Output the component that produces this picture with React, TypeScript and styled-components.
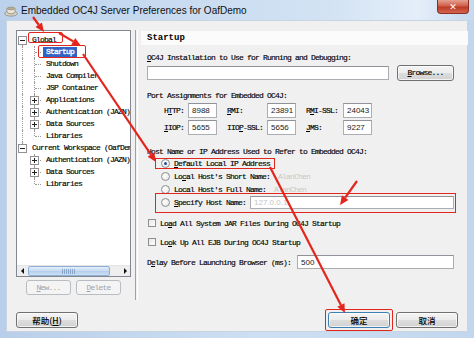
import React from 'react';
import styled, { createGlobalStyle, css } from 'styled-components';

const MONO = `"Liberation Mono", "DejaVu Sans Mono", monospace`;
const CJK = `"Noto Sans CJK SC", "Noto Sans", sans-serif`;

const GlobalStyle = createGlobalStyle`
  html, body { margin: 0; padding: 0; background: #5f7184; }
  #root { width: 474px; height: 338px; }
`;

// shared look of the small SimSun-like dialog text
const monoText = css`
  font-family: ${MONO};
  font-size: 8px;
  letter-spacing: -0.8px;
  color: #000;
  -webkit-text-stroke: 0.15px #000;
`;

const Window = styled.div`
  position: relative;
  width: 474px;
  height: 338px;
  box-sizing: border-box;
  padding: 0 6px 6px 6px;
  background: linear-gradient(90deg, #b9cfe9 0%, #cddff2 55%, #c2d6ed 100%);
  display: flex;
  flex-direction: column;
  overflow: hidden;
`;

const TitleBar = styled.div`
  height: 20px;
  margin: 0 -6px;
  padding: 0 5px 0 4px;
  display: flex;
  align-items: center;
  background: linear-gradient(90deg, #bcd2ec 0%, #d3e3f4 70%, #e4eef9 88%, #c6d9ef 100%);
`;

const Title = styled.span`
  margin-left: 3px;
  font-family: "Liberation Sans", Arial, sans-serif;
  font-size: 10px;
  color: #111;
  white-space: nowrap;
`;

const CloseButton = styled.div`
  margin-left: auto;
  align-self: flex-start;
  width: 32px;
  height: 14px;
  box-sizing: border-box;
  border: 1px solid #8a2d22;
  border-top: none;
  border-radius: 0 0 4px 4px;
  background: linear-gradient(#e5a08f 0%, #d0604b 45%, #bd3a26 55%, #d2664d 100%);
  display: flex;
  align-items: center;
  justify-content: center;
  color: #fff;
  font-family: "DejaVu Sans", sans-serif;
  font-weight: bold;
  font-size: 9px;
`;

const Body = styled.div`
  flex: 1;
  display: flex;
  flex-direction: column;
  background: #f0f0f0;
  box-shadow: inset 0 0 0 1px #c8d4e2;
`;

const Main = styled.div`
  display: flex;
  margin-top: 10px;
  height: 270px;
`;

const LeftCol = styled.div`
  margin-left: 10px;
  width: 115px;
  display: flex;
  flex-direction: column;
`;

const TreeBox = styled.div`
  height: 247px;
  box-sizing: border-box;
  border: 1px solid #828790;
  background: #fff;
  display: flex;
  flex-direction: column;
`;

const TreeBody = styled.div`
  flex: 1;
  padding-top: 3px;
  overflow: hidden;
`;

const TreeRow = styled.div`
  display: flex;
  align-items: center;
  height: 12px;
  white-space: nowrap;
`;

type VLine = 'full' | 'top' | 'bottom' | 'none';

const Gutter = styled.span<{ $v: VLine; $h: boolean }>`
  position: relative;
  flex: 0 0 12px;
  height: 12px;
  &::before {
    content: '';
    position: absolute;
    left: 5px;
    top: ${(p) => (p.$v === 'bottom' ? '6px' : '0')};
    bottom: ${(p) => (p.$v === 'top' ? '6px' : '0')};
    border-left: ${(p) => (p.$v === 'none' ? '0' : '1px dotted #9a9a9a')};
  }
  &::after {
    content: '';
    position: absolute;
    left: 6px;
    right: 0;
    top: 6px;
    border-top: ${(p) => (p.$h ? '1px dotted #9a9a9a' : '0')};
  }
  svg { position: absolute; left: 1px; top: 2px; z-index: 1; }
`;

const TreeLabel = styled.span<{ $root?: boolean; $selected?: boolean }>`
  ${monoText}
  margin-left: ${(p) => (p.$root ? '0' : '2px')};
  padding: 0 3px;
  height: 10px;
  line-height: 10px;
  ${(p) =>
    p.$selected &&
    css`
      background: #3063c4;
      color: #fff;
      -webkit-text-stroke: 0.3px #fff;
    `}
`;

const HScroll = styled.div`
  height: 10px;
  display: flex;
  align-items: stretch;
  background: #eeeeee;
  border-top: 1px solid #e4e4e4;
`;

const ScrollArrow = styled.div<{ $dir: 'left' | 'right' }>`
  width: 10px;
  display: flex;
  align-items: center;
  justify-content: center;
  &::before {
    content: '';
    border-top: 3px solid transparent;
    border-bottom: 3px solid transparent;
    ${(p) => (p.$dir === 'left' ? 'border-right: 3px solid #111;' : 'border-left: 3px solid #111;')}
  }
`;

const ScrollThumb = styled.div`
  margin-left: 1px;
  width: 82px;
  box-sizing: border-box;
  border: 1px solid #8eb0d6;
  border-radius: 2px;
  background: linear-gradient(#e3eefa, #c4d9f1 50%, #b3cdec 51%, #cfe0f4);
  display: flex;
  align-items: center;
  justify-content: center;
  &::before {
    content: '';
    width: 14px;
    height: 5px;
    background: repeating-linear-gradient(90deg, #8aa8cc 0 1px, transparent 1px 2px);
  }
`;

const ScrollTrack = styled.div`
  flex: 1;
`;

const ButtonRow = styled.div`
  margin-top: 3px;
  padding-left: 10px;
  display: flex;
  gap: 5px;
`;

const buttonBase = css`
  box-sizing: border-box;
  height: 15px;
  border-radius: 3px;
  display: flex;
  align-items: center;
  justify-content: center;
`;

const SmallButton = styled.div`
  ${buttonBase}
  width: 45px;
  border: 1px solid #b9bdc1;
  background: #f4f4f4;
  color: #a3a3a3;
  font-family: ${MONO};
  font-size: 8px;
  letter-spacing: -0.8px;
`;

const Separator = styled.div`
  margin-left: 4px;
  width: 1px;
  border-left: 1px solid #a0a0a0;
  border-right: 1px solid #ffffff;
`;

const RightCol = styled.div`
  margin-left: 1px;
  flex: 1;
  display: flex;
  flex-direction: column;
`;

const Header = styled.div`
  margin-top: 1px;
  margin-left: 2px;
  height: 14px;
  padding-left: 6px;
  display: flex;
  align-items: center;
  background: #fbfbfb;
  font-family: ${MONO};
  font-weight: bold;
  font-size: 9px;
  color: #000;
`;

const Content = styled.div`
  padding: 0 14px 0 8px;
  display: flex;
  flex-direction: column;
`;

const Label = styled.div<{ $mt?: number }>`
  ${monoText}
  margin-top: ${(p) => p.$mt ?? 0}px;
  height: 10px;
  line-height: 10px;
  white-space: nowrap;
`;

const FieldRow = styled.div<{ $mt?: number; $h?: number }>`
  ${monoText}
  margin-top: ${(p) => p.$mt ?? 0}px;
  height: ${(p) => p.$h ?? 15}px;
  display: flex;
  align-items: center;
  white-space: nowrap;
`;

const TextBox = styled.div<{ $w?: number; $h?: number; $ml?: number; $muted?: boolean }>`
  box-sizing: border-box;
  ${(p) => (p.$w ? `width: ${p.$w}px;` : 'flex: 1;')}
  height: ${(p) => p.$h ?? 14}px;
  margin-left: ${(p) => p.$ml ?? 0}px;
  border: 1px solid #abadb3;
  border-top-color: #8f9298;
  background: #fff;
  padding-left: 3px;
  display: flex;
  align-items: center;
  font-family: "Liberation Sans", Arial, sans-serif;
  font-size: 8px;
  letter-spacing: 0;
  -webkit-text-stroke: 0;
  color: ${(p) => (p.$muted ? '#c4c4c4' : '#222')};
`;

const Button = styled.div<{ $w: number; $default?: boolean; $ml?: number }>`
  ${buttonBase}
  width: ${(p) => p.$w}px;
  height: 16px;
  margin-left: ${(p) => p.$ml ?? 0}px;
  border: 1px solid ${(p) => (p.$default ? '#3c7fb1' : '#707070')};
  background: linear-gradient(#f4f4f4 0%, #ececec 48%, #dddddd 52%, #d2d2d2 100%);
  box-shadow: inset 0 0 0 1px rgba(255, 255, 255, 0.7);
  color: #000;
`;

const MonoText = styled.span`
  ${monoText}
`;

const CjkText = styled.span`
  font-family: ${CJK};
  font-size: 8.5px;
  font-weight: 500;
`;

const PortGrid = styled.div`
  ${monoText}
  margin-top: 2px;
  padding-left: 17px;
  display: grid;
  grid-template-columns: 24px 39px 40px 39px 37px 29px;
  grid-auto-rows: 15px;
  row-gap: 2px;
  align-items: center;
`;

const OptionRow = styled.div<{ $h: number; $mt?: number; $indent: number }>`
  ${monoText}
  margin-top: ${(p) => p.$mt ?? 0}px;
  height: ${(p) => p.$h}px;
  padding-left: ${(p) => p.$indent}px;
  display: flex;
  align-items: center;
  gap: 4px;
  white-space: nowrap;
`;

const Radio = styled.span<{ $checked?: boolean }>`
  width: 9px;
  height: 9px;
  box-sizing: border-box;
  border-radius: 50%;
  border: 1px solid #8e8f8f;
  background: radial-gradient(circle at 40% 40%, #ffffff, #e3e3e3);
  display: flex;
  align-items: center;
  justify-content: center;
  flex: 0 0 auto;
  &::before {
    content: '';
    width: 3px;
    height: 3px;
    border-radius: 50%;
    background: ${(p) => (p.$checked ? '#1f4e94' : 'transparent')};
  }
`;

const Check = styled.span`
  width: 8px;
  height: 8px;
  box-sizing: border-box;
  border: 1px solid #8e8f8f;
  background: linear-gradient(135deg, #e6e6e6, #ffffff);
  flex: 0 0 auto;
`;

const Muted = styled.span`
  color: #c8c8c8;
  -webkit-text-stroke: 0;
  margin-left: 4px;
`;

const Footer = styled.div`
  margin-top: 11px;
  height: 17px;
  padding: 0 10px;
  display: flex;
  align-items: center;
`;

const Spacer = styled.div`
  flex: 1;
`;

const U = styled.span`
  text-decoration: underline;
`;

const Overlay = styled.svg`
  position: absolute;
  left: 0;
  top: 0;
  pointer-events: none;
`;

const Expander = ({ open }: { open: boolean }) => (
  <svg width="9" height="9" viewBox="0 0 9 9">
    <rect x="0.5" y="0.5" width="8" height="8" fill="#fff" stroke="#919191" />
    <line x1="2" y1="4.5" x2="7" y2="4.5" stroke="#222" />
    {!open && <line x1="4.5" y1="2" x2="4.5" y2="7" stroke="#222" />}
  </svg>
);

type TreeItem = {
  label: string;
  root?: boolean;
  selected?: boolean;
  cells: { v: VLine; h: boolean; box?: 'open' | 'closed' }[];
};

const tree: TreeItem[] = [
  { label: 'Global', root: true, cells: [{ v: 'bottom', h: false, box: 'open' }] },
  { label: 'Startup', selected: true, cells: [{ v: 'full', h: false }, { v: 'full', h: true }] },
  { label: 'Shutdown', cells: [{ v: 'full', h: false }, { v: 'full', h: true }] },
  { label: 'Java Compiler', cells: [{ v: 'full', h: false }, { v: 'full', h: true }] },
  { label: 'JSP Container', cells: [{ v: 'full', h: false }, { v: 'full', h: true }] },
  { label: 'Applications', cells: [{ v: 'full', h: false }, { v: 'full', h: true, box: 'closed' }] },
  { label: 'Authentication (JAZN)', cells: [{ v: 'full', h: false }, { v: 'full', h: true, box: 'closed' }] },
  { label: 'Data Sources', cells: [{ v: 'full', h: false }, { v: 'full', h: true, box: 'closed' }] },
  { label: 'Libraries', cells: [{ v: 'full', h: false }, { v: 'top', h: true }] },
  { label: 'Current Workspace (OafDemo)', root: true, cells: [{ v: 'top', h: false, box: 'open' }] },
  { label: 'Authentication (JAZN)', cells: [{ v: 'none', h: false }, { v: 'full', h: true, box: 'closed' }] },
  { label: 'Data Sources', cells: [{ v: 'none', h: false }, { v: 'full', h: true, box: 'closed' }] },
  { label: 'Libraries', cells: [{ v: 'none', h: false }, { v: 'top', h: true }] },
];

const RED = '#e3261d';

const Arrow = ({ x1, y1, x2, y2 }: { x1: number; y1: number; x2: number; y2: number }) => {
  const a = Math.atan2(y2 - y1, x2 - x1);
  const len = 9;
  const half = 4;
  const bx = x2 - len * Math.cos(a);
  const by = y2 - len * Math.sin(a);
  const p1 = `${bx + half * Math.sin(a)},${by - half * Math.cos(a)}`;
  const p2 = `${bx - half * Math.sin(a)},${by + half * Math.cos(a)}`;
  return (
    <g>
      <line x1={x1} y1={y1} x2={bx} y2={by} stroke={RED} strokeWidth={2.2} />
      <polygon points={`${x2},${y2} ${p1} ${p2}`} fill={RED} />
    </g>
  );
};

// red markup drawn on top of the screenshot
const Annotations = () => (
  <Overlay width="474" height="338" viewBox="0 0 474 338">
    <g fill="none" stroke={RED} strokeWidth="1">
      <rect x="28.5" y="32.5" width="34" height="10" rx="1.5" />
      <rect x="38.5" y="45.5" width="47" height="12" rx="1.5" />
      <rect x="155.5" y="158.5" width="119" height="10" />
      <rect x="155.5" y="193.5" width="300" height="19" />
      <rect x="325.5" y="309.5" width="67" height="21" rx="1.5" />
    </g>
    <Arrow x1={33} y1={17} x2={44} y2={32} />
    <Arrow x1={59} y1={33} x2={81} y2={46} />
    <Arrow x1={83} y1={54} x2={156} y2={162} />
    <Arrow x1={270} y1={167} x2={345} y2={313} />
    <Arrow x1={357} y1={181} x2={340} y2={205} />
  </Overlay>
);

const AppIcon = () => (
  <svg width="14" height="14" viewBox="0 0 14 14">
    <ellipse cx="7" cy="10.5" rx="6.3" ry="2.6" fill="#d8d2c2" stroke="#8f8a7c" strokeWidth="0.8" />
    <path d="M3 5.5 h8 v3 a4 2.3 0 0 1 -8 0 z" fill="#ece7d9" stroke="#8f8a7c" strokeWidth="0.8" />
    <ellipse cx="7" cy="5.5" rx="4" ry="1.4" fill="#b8ad94" stroke="#8f8a7c" strokeWidth="0.6" />
  </svg>
);

export default function App() {
  return (
    <>
      <GlobalStyle />
      <Window>
        <TitleBar>
          <AppIcon />
          <Title>Embedded OC4J Server Preferences for OafDemo</Title>
          <CloseButton>✕</CloseButton>
        </TitleBar>
        <Body>
          <Main>
            <LeftCol>
              <TreeBox>
                <TreeBody>
                  {tree.map((item, i) => (
                    <TreeRow key={i}>
                      {item.cells.map((c, j) => (
                        <Gutter key={j} $v={c.v} $h={c.h}>
                          {c.box && <Expander open={c.box === 'open'} />}
                        </Gutter>
                      ))}
                      <TreeLabel $root={item.root} $selected={item.selected}>
                        {item.label}
                      </TreeLabel>
                    </TreeRow>
                  ))}
                </TreeBody>
                <HScroll>
                  <ScrollArrow $dir="left" />
                  <ScrollThumb />
                  <ScrollTrack />
                  <ScrollArrow $dir="right" />
                </HScroll>
              </TreeBox>
              <ButtonRow>
                <SmallButton>
                  <U>N</U>ew...
                </SmallButton>
                <SmallButton>
                  <U>D</U>elete
                </SmallButton>
              </ButtonRow>
            </LeftCol>
            <Separator />
            <RightCol>
              <Header>Startup</Header>
              <Content>
                <Label $mt={8}>
                  <U>O</U>C4J Installation to Use for Running and Debugging:
                </Label>
                <FieldRow $mt={2}>
                  <TextBox $h={14} />
                  <Button $w={57} $ml={8}>
                    <MonoText>
                      <U>B</U>rowse...
                    </MonoText>
                  </Button>
                </FieldRow>
                <Label $mt={11}>Port Assignments for Embedded OC4J:</Label>
                <PortGrid>
                  <span>
                    H<U>T</U>TP:
                  </span>
                  <TextBox $w={29} $h={15}>8988</TextBox>
                  <span>
                    <U>R</U>MI:
                  </span>
                  <TextBox $w={29} $h={15}>23891</TextBox>
                  <span>
                    R<U>M</U>I-SSL:
                  </span>
                  <TextBox $w={29} $h={15}>24043</TextBox>
                  <span>
                    <U>I</U>IOP:
                  </span>
                  <TextBox $w={29} $h={15}>5655</TextBox>
                  <span>
                    IIO<U>P</U>-SSL:
                  </span>
                  <TextBox $w={29} $h={15}>5656</TextBox>
                  <span>
                    <U>J</U>MS:
                  </span>
                  <TextBox $w={29} $h={15}>9227</TextBox>
                </PortGrid>
                <Label $mt={12}>Host Name or IP Address Used to Refer to Embedded OC4J:</Label>
                <OptionRow $h={13} $indent={14}>
                  <Radio $checked />
                  <span>
                    <U>D</U>efault Local IP Address
                  </span>
                </OptionRow>
                <OptionRow $h={13} $indent={14}>
                  <Radio />
                  <span>
                    Lo<U>c</U>al Host's Short Name:
                  </span>
                  <Muted>AlanChen</Muted>
                </OptionRow>
                <OptionRow $h={13} $indent={14}>
                  <Radio />
                  <span>
                    <U>L</U>ocal Host's Full Name:
                  </span>
                  <Muted>AlanChen</Muted>
                </OptionRow>
                <OptionRow $h={13} $indent={14}>
                  <Radio />
                  <span>
                    <U>S</U>pecify Host Name:
                  </span>
                  <TextBox $h={13} $muted>127.0.0.1</TextBox>
                </OptionRow>
                <OptionRow $h={12} $mt={8} $indent={1}>
                  <Check />
                  <span>
                    Lo<U>a</U>d All System JAR Files During OC4J Startup
                  </span>
                </OptionRow>
                <OptionRow $h={12} $mt={7} $indent={1}>
                  <Check />
                  <span>
                    Lo<U>o</U>k Up All EJB During OC4J Startup
                  </span>
                </OptionRow>
                <FieldRow $mt={7} $h={14}>
                  <span>
                    D<U>e</U>lay Before Launching Browser (ms):
                  </span>
                  <TextBox $h={14} $ml={6}>500</TextBox>
                </FieldRow>
              </Content>
            </RightCol>
          </Main>
          <Footer>
            <Button $w={62}>
              <CjkText>
                帮助(<U>H</U>)
              </CjkText>
            </Button>
            <Spacer />
            <Button $w={62} $default>
              <CjkText>确定</CjkText>
            </Button>
            <Button $w={62} $ml={6}>
              <CjkText>取消</CjkText>
            </Button>
          </Footer>
        </Body>
        <Annotations />
      </Window>
    </>
  );
}
